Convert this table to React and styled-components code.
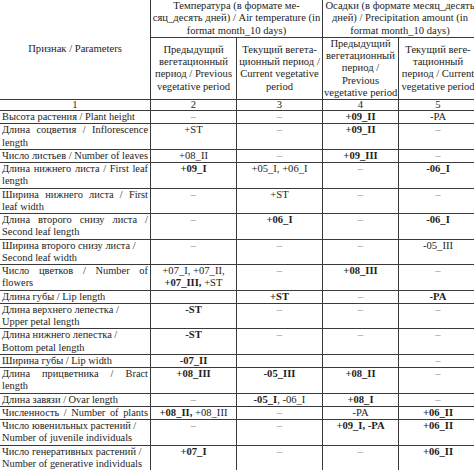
import React from "react";
import styled, { createGlobalStyle } from "styled-components";

const Global = createGlobalStyle`
  html, body { margin: 0; padding: 0; background: #fff; overflow: hidden; }
  body { font-family: "Liberation Serif", "Times New Roman", serif; color: #1e1e1e; }
`;

const Page = styled.div`
  width: 474px;
  height: 470px;
  overflow: hidden;
`;

const Table = styled.table`
  border-collapse: collapse;
  table-layout: fixed;
  width: 478px;
  margin: -1px 0 0 -1px;
  font-size: 10.6px;
  line-height: 12.25px;
`;

const Cell = styled.td`
  border: 1px solid #3a3a3a;
  padding: 0 1px;
  overflow: hidden;
  white-space: nowrap;
`;

const HeadCell = styled(Cell)`
  text-align: center;
  vertical-align: middle;
  height: ${(p) => p.$h || "auto"};
`;

const NumCell = styled(Cell)`
  text-align: center;
  line-height: 10px;
  height: 10px;
  border-top-width: 1.5px;
  border-bottom-width: 1.5px;
`;

const ParamCell = styled(Cell)`
  text-align: left;
  vertical-align: top;
  padding-left: 2px;
  padding-right: 2px;
  font-size: 10.4px;
`;

const ValueCell = styled(Cell)`
  text-align: center;
  vertical-align: top;
`;

const Line = styled.div`
  text-align: ${(p) => (p.$justify ? "justify" : "left")};
  text-align-last: ${(p) => (p.$justify ? "justify" : "left")};
  white-space: nowrap;
  height: 12.25px;
`;

const Seg = styled.span`
  font-weight: ${(p) => (p.$b ? 700 : 400)};
`;

const Dash = styled.span`
  color: #8a8a8a;
`;

const D = "–";
const b = (t) => ({ t, b: true });
const n = (t) => ({ t, b: false });

const rows = [
  { p: ["Высота растения / Plant height"], v: [[D], [D], [b("+09_II")], [n("-PA")]] },
  { p: ["Длина соцветия / Inflorescence", "length"], j: true, v: [[n("+ST")], [D], [b("+09_II")], [D]] },
  { p: ["Число листьев / Number of leaves"], v: [[n("+08_II")], [D], [b("+09_III")], [D]] },
  { p: ["Длина нижнего листа / First leaf", "length"], j: true, v: [[b("+09_I")], [n("+05_I, +06_I")], [D], [b("-06_I")]] },
  { p: ["Ширина нижнего листа / First", "leaf width"], j: true, v: [[D], [n("+ST")], [D], [D]] },
  { p: ["Длина второго снизу листа /", "Second leaf length"], j: true, v: [[D], [b("+06_I")], [D], [b("-06_I")]] },
  { p: ["Ширина второго снизу листа /", "Second leaf width"], v: [[D], [D], [D], [n("-05_III")]] },
  {
    p: ["Число цветков / Number of", "flowers"],
    j: true,
    v: [[n("+07_I, +07_II,"), "br", b("+07_III, "), n(" +ST")], [D], [b("+08_III")], [D]],
  },
  { p: ["Длина губы / Lip length"], v: [[], [b("+ST")], [D], [b("-PA")]] },
  { p: ["Длина верхнего лепестка /", "Upper petal length"], v: [[b("-ST")], [D], [D], [D]] },
  { p: ["Длина нижнего лепестка /", "Bottom petal length"], v: [[b("-ST")], [D], [D], [D]] },
  { p: ["Ширина губы / Lip width"], v: [[b("-07_II")], [], [], [D]] },
  { p: ["Длина прицветника / Bract", "length"], j: true, v: [[b("+08_III")], [b("-05_III")], [b("+08_II")], [D]] },
  { p: ["Длина завязи / Ovar length"], v: [[D], [b("-05_I"), n(", -06_I")], [b("+08_I")], [D]] },
  { p: ["Численность / Number of plants"], j: true, v: [[b("+08_II,"), n(" +08_III")], [D], [n("-PA")], [b("+06_II")]] },
  { p: ["Число ювенильных растений /", "Number of juvenile individuals"], v: [[D], [D], [b("+09_I, -PA")], [b("+06_II")]] },
  { p: ["Число генеративных растений /", "Number of generative individuals"], v: [[b("+07_I")], [D], [D], [b("+06_II")]] },
];

function Value({ segs }) {
  return (
    <ValueCell>
      {segs.map((s, i) => {
        if (s === D) return <Dash key={i}>{D}</Dash>;
        if (s === "br") return <br key={i} />;
        return (
          <Seg key={i} $b={s.b}>
            {s.t}
          </Seg>
        );
      })}
    </ValueCell>
  );
}

export default function App() {
  return (
    <Page>
      <Global />
      <Table>
        <colgroup>
          <col style={{ width: 151 }} />
          <col style={{ width: 86 }} />
          <col style={{ width: 86 }} />
          <col style={{ width: 76 }} />
          <col style={{ width: 79 }} />
        </colgroup>
        <thead>
          <tr>
            <HeadCell rowSpan={2}>Признак / Parameters</HeadCell>
            <HeadCell colSpan={2} $h="36px">
              Температура (в формате ме-
              <br />
              сяц_десять дней) / Air temperature (in
              <br />
              format month_10 days)
            </HeadCell>
            <HeadCell colSpan={2}>
              Осадки (в формате месяц_десять
              <br />
              дней) / Precipitation amount (in
              <br />
              format month_10 days)
            </HeadCell>
          </tr>
          <tr>
            <HeadCell $h="61px">
              Предыдущий
              <br />
              вегетационный
              <br />
              период / Previous
              <br />
              vegetative period
            </HeadCell>
            <HeadCell>
              Текущий вегета-
              <br />
              ционный период /
              <br />
              Current vegetative
              <br />
              period
            </HeadCell>
            <HeadCell>
              Предыдущий
              <br />
              вегетационный
              <br />
              период /
              <br />
              Previous
              <br />
              vegetative period
            </HeadCell>
            <HeadCell>
              Текущий веге-
              <br />
              тационный
              <br />
              период / Current
              <br />
              vegetative period
            </HeadCell>
          </tr>
        </thead>
        <tbody>
          <tr>
            {[1, 2, 3, 4, 5].map((k) => (
              <NumCell key={k}>{k}</NumCell>
            ))}
          </tr>
          {rows.map((r, i) => (
            <tr key={i}>
              <ParamCell>
                {r.p.map((l, k) => (
                  <Line key={k} $justify={r.j && k === 0}>
                    {l}
                  </Line>
                ))}
              </ParamCell>
              {r.v.map((segs, k) => (
                <Value key={k} segs={segs} />
              ))}
            </tr>
          ))}
        </tbody>
      </Table>
    </Page>
  );
}
